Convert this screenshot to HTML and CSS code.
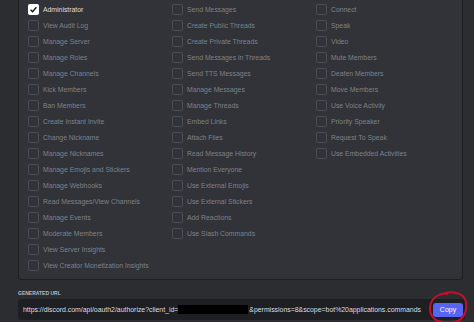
FILE: index.html
```html
<!DOCTYPE html>
<html lang="en">
<head>
    <meta charset="UTF-8">
    <meta name="viewport" content="width=device-width, initial-scale=1.0">
    <title>OAuth2 URL Generator</title>
    <link rel="stylesheet" href="styles.css">
</head>
<body>
    <div class="page">
        <div class="perm-panel">
            <div class="perm-col">
                <label class="perm checked"><span class="box"><svg viewBox="0 0 11 11" width="11" height="11"><path d="M2.6 5.8 L4.5 7.7 L8.4 3.3" fill="none" stroke="#111" stroke-width="1.4"/></svg></span>Administrator</label>
                <label class="perm"><span class="box"></span>View Audit Log</label>
                <label class="perm"><span class="box"></span>Manage Server</label>
                <label class="perm"><span class="box"></span>Manage Roles</label>
                <label class="perm"><span class="box"></span>Manage Channels</label>
                <label class="perm"><span class="box"></span>Kick Members</label>
                <label class="perm"><span class="box"></span>Ban Members</label>
                <label class="perm"><span class="box"></span>Create Instant Invite</label>
                <label class="perm"><span class="box"></span>Change Nickname</label>
                <label class="perm"><span class="box"></span>Manage Nicknames</label>
                <label class="perm"><span class="box"></span>Manage Emojis and Stickers</label>
                <label class="perm"><span class="box"></span>Manage Webhooks</label>
                <label class="perm"><span class="box"></span>Read Messages/View Channels</label>
                <label class="perm"><span class="box"></span>Manage Events</label>
                <label class="perm"><span class="box"></span>Moderate Members</label>
                <label class="perm"><span class="box"></span>View Server Insights</label>
                <label class="perm"><span class="box"></span>View Creator Monetization Insights</label>
            </div>
            <div class="perm-col">
                <label class="perm"><span class="box"></span>Send Messages</label>
                <label class="perm"><span class="box"></span>Create Public Threads</label>
                <label class="perm"><span class="box"></span>Create Private Threads</label>
                <label class="perm"><span class="box"></span>Send Messages in Threads</label>
                <label class="perm"><span class="box"></span>Send TTS Messages</label>
                <label class="perm"><span class="box"></span>Manage Messages</label>
                <label class="perm"><span class="box"></span>Manage Threads</label>
                <label class="perm"><span class="box"></span>Embed Links</label>
                <label class="perm"><span class="box"></span>Attach Files</label>
                <label class="perm"><span class="box"></span>Read Message History</label>
                <label class="perm"><span class="box"></span>Mention Everyone</label>
                <label class="perm"><span class="box"></span>Use External Emojis</label>
                <label class="perm"><span class="box"></span>Use External Stickers</label>
                <label class="perm"><span class="box"></span>Add Reactions</label>
                <label class="perm"><span class="box"></span>Use Slash Commands</label>
            </div>
            <div class="perm-col">
                <label class="perm"><span class="box"></span>Connect</label>
                <label class="perm"><span class="box"></span>Speak</label>
                <label class="perm"><span class="box"></span>Video</label>
                <label class="perm"><span class="box"></span>Mute Members</label>
                <label class="perm"><span class="box"></span>Deafen Members</label>
                <label class="perm"><span class="box"></span>Move Members</label>
                <label class="perm"><span class="box"></span>Use Voice Activity</label>
                <label class="perm"><span class="box"></span>Priority Speaker</label>
                <label class="perm"><span class="box"></span>Request To Speak</label>
                <label class="perm"><span class="box"></span>Use Embedded Activities</label>
            </div>
        </div>

        <div class="url-section">
            <div class="url-label">Generated URL</div>
            <div class="url-box">
                <span class="url-text">https://discord.com/api/oauth2/authorize?client_id=<span class="redacted"></span>&amp;permissions=8&amp;scope=bot%20applications.commands</span>
                <button class="copy-btn">Copy</button>
                <svg class="scribble" viewBox="0 0 40 34" width="40" height="34">
                    <path d="M14 3 C 22 0, 33 1, 37 8 C 40 15, 38 26, 30 30 C 22 33, 8 32, 4 25 C 0 18, 2 9, 9 5 C 12 3, 16 2, 19 3" fill="none" stroke="#c4102c" stroke-width="2" stroke-linecap="round"/>
                </svg>
            </div>
        </div>
    </div>
</body>
</html>
```

FILE: styles.css
```css
body {
    margin: 0;
    background: #2b2d31;
    font-family: "Liberation Sans", Arial, sans-serif;
    width: 474px;
    height: 322px;
    overflow: hidden;
}

.page {
    padding: 0 11px 0 18px;
}

.perm-panel {
    display: grid;
    grid-template-columns: 144px 144px 1fr;
    background: #313338;
    border: 1px solid #1e1f22;
    border-top: none;
    border-radius: 0 0 4px 4px;
    padding: 1px 0 5px 9px;
    height: 273px;
}

.perm-col {
    display: flex;
    flex-direction: column;
}

.perm {
    display: flex;
    align-items: center;
    height: 16px;
    font-size: 6.85px;
    color: #7d818a;
    white-space: nowrap;
}

.box {
    width: 9px;
    height: 9px;
    border: 1px solid #4a4d55;
    border-radius: 2px;
    margin-right: 4px;
    flex-shrink: 0;
    display: flex;
}

.perm.checked {
    color: #dbdee1;
}

.perm.checked .box {
    background: #ffffff;
    width: 11px;
    height: 11px;
    border: none;
}

.box svg {
    display: block;
}

.url-section {
    padding-top: 10px;
}

.url-label {
    font-size: 5px;
    font-weight: bold;
    text-transform: uppercase;
    color: #b5bac1;
    height: 9px;
}

.url-box {
    position: relative;
    display: flex;
    align-items: center;
    justify-content: space-between;
    background: #1e1f22;
    height: 21px;
    padding: 0 2px 0 5px;
    margin-right: -2px;
    border-radius: 3px;
}

.url-text {
    font-size: 6.9px;
    color: #dbdee1;
    white-space: nowrap;
    display: flex;
    align-items: center;
}

.redacted {
    display: inline-block;
    width: 70px;
    height: 9px;
    background: #000000;
    margin-right: 1px;
}

.copy-btn {
    background: #5865f2;
    color: #ffffff;
    border: none;
    border-radius: 3px;
    width: 30px;
    height: 14px;
    padding: 0;
    font-family: "Liberation Sans", Arial, sans-serif;
    font-size: 7px;
}

.scribble {
    position: absolute;
    right: -3px;
    top: -8px;
}
```
